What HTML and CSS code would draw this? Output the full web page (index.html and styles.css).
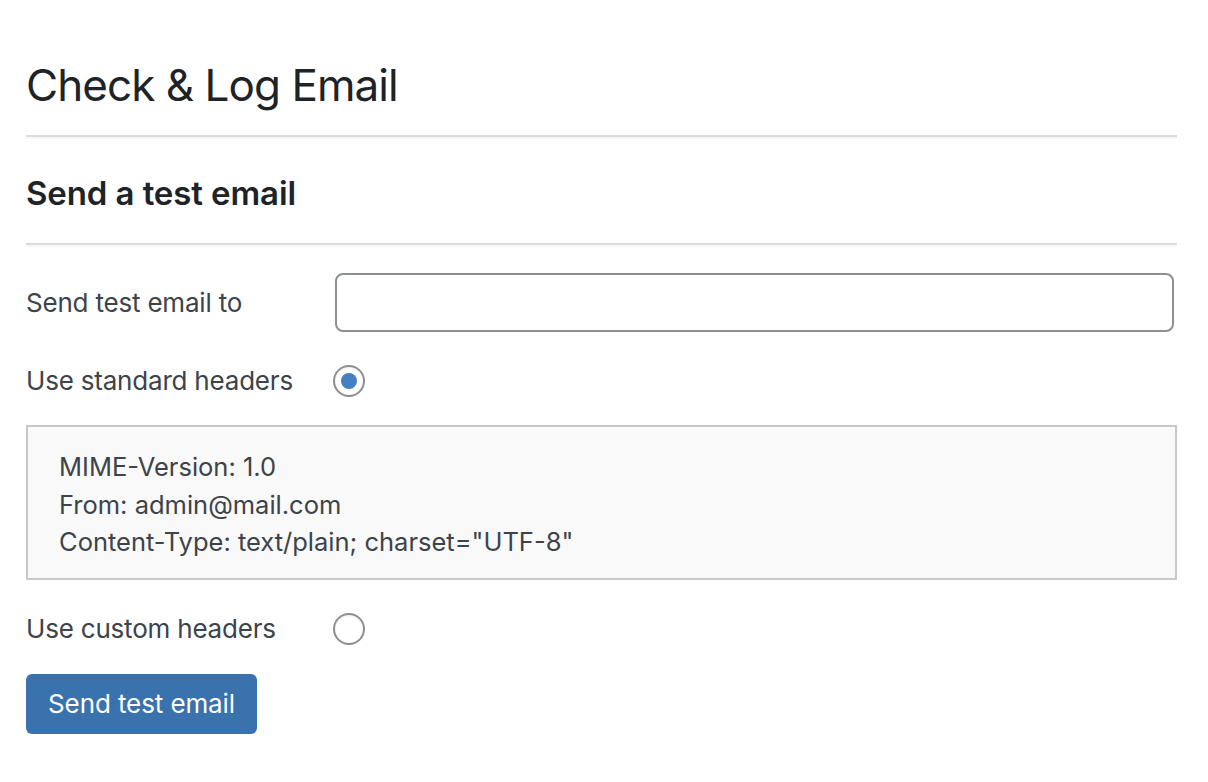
FILE: index.html
```html
<!DOCTYPE html>
<html>
<head>
<meta charset="utf-8">
<link rel="stylesheet" href="styles.css">
</head>
<body>
<div class="wrap">
  <h1 class="title">Check &amp; Log Email</h1>
  <hr class="sep">
  <h2 class="subtitle">Send a test email</h2>
  <hr class="sep">
  <div class="row row-input">
    <label class="label" for="to">Send test email to</label>
    <input class="text-input" id="to" type="text">
  </div>
  <div class="row row-radio">
    <span class="label">Use standard headers</span>
    <span class="radio checked"></span>
  </div>
  <div class="headers-box">
    <div class="hline">MIME-Version: 1.0</div>
    <div class="hline">From: admin@mail.com</div>
    <div class="hline">Content-Type: text/plain; charset="UTF-8"</div>
  </div>
  <div class="row row-radio row-custom">
    <span class="label">Use custom headers</span>
    <span class="radio"></span>
  </div>
  <button class="btn" type="button">Send test email</button>
</div>
</body>
</html>
```
FILE: styles.css
```css
html, body {
  margin: 0;
  padding: 0;
  background: #ffffff;
}
body {
  font-family: Inter, "Noto Sans", "Liberation Sans", sans-serif;
  color: #3c434a;
}
.wrap {
  padding: 55px 31px 0 26px;
}
.title {
  margin: 0 0 20px;
  font-size: 44px;
  line-height: 60px;
  font-weight: 400;
  color: #1d2327;
  letter-spacing: -0.95px;
}
.sep {
  margin: 0;
  height: 0;
  border: 0;
  border-top: 2px solid #dcdcde;
  border-bottom: 2px solid #f6f7f7;
}
.subtitle {
  margin: 34px 0 30px;
  font-size: 33px;
  line-height: 40px;
  font-weight: 600;
  color: #1d2327;
  letter-spacing: -0.1px;
}
.row {
  display: flex;
  align-items: center;
}
.label {
  width: 309px;
  flex: none;
  font-size: 26px;
  line-height: 32px;
  color: #3c434a;
  letter-spacing: -0.2px;
}
.row-input {
  margin-top: 26px;
}
.text-input {
  flex: 1;
  height: 59px;
  box-sizing: border-box;
  border: 2px solid #8c8f94;
  border-radius: 8px;
  background: #fff;
  margin: 0 3px 0 0;
  padding: 0 16px;
  font: inherit;
}
.row-radio {
  margin-top: 33px;
  height: 32px;
}
.radio {
  width: 32px;
  height: 32px;
  box-sizing: border-box;
  border: 2px solid #8c8f94;
  border-radius: 50%;
  background: #fff;
  margin-left: -2px;
  display: flex;
  align-items: center;
  justify-content: center;
  box-shadow: inset 0 1px 2px rgba(0,0,0,0.08);
}
.radio.checked::before {
  content: "";
  width: 16px;
  height: 16px;
  border-radius: 50%;
  background: #4580c3;
}
.headers-box {
  margin-top: 28px;
  border: 2px solid #c8c8c8;
  background: #f9f9f9;
  padding: 21px 31px 17px;
  font-size: 25.5px;
  line-height: 37.5px;
  color: #3c434a;
}
.row-custom {
  margin-top: 33px;
}
.btn {
  display: block;
  margin-top: 29px;
  height: 60px;
  padding: 0 22px;
  border: 0;
  border-radius: 6px;
  background: #3a72ad;
  color: #fff;
  font-family: inherit;
  font-size: 26px;
  line-height: 60px;
  letter-spacing: -0.1px;
}
```
